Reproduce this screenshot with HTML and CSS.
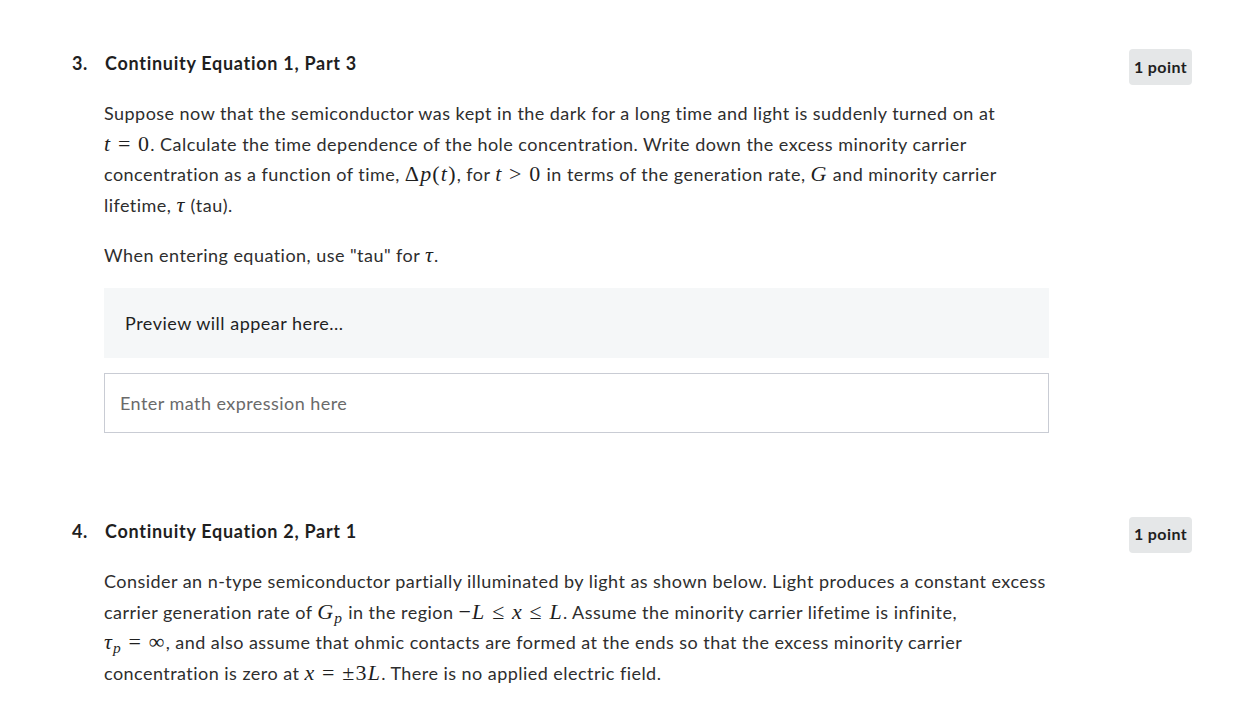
FILE: index.html
```html
<!DOCTYPE html>
<html lang="en">
<head>
<meta charset="utf-8">
<title>Continuity Equation</title>
<link rel="stylesheet" href="styles.css">
</head>
<body>
<main class="page">
  <section class="question">
    <div class="num">3.</div>
    <h2 class="title">Continuity Equation 1, Part 3</h2>
    <div class="badge">1 point</div>
    <div class="body">
      <p>Suppose now that the semiconductor was kept in the dark for a long time and light is suddenly turned on at<br><span class="m"><i>t</i><span class="rel">=</span>0</span>. Calculate the time dependence of the hole concentration. Write down the excess minority carrier<br>concentration as a function of time, <span class="m">Δ<i>p</i>(<i>t</i>)</span>, for <span class="m"><i>t</i><span class="rel">&gt;</span>0</span> in terms of the generation rate, <span class="m"><i>G</i></span> and minority carrier<br>lifetime, <span class="m"><i>τ</i></span> (tau).</p>
      <p>When entering equation, use "tau" for <span class="m"><i>τ</i></span>.</p>
      <div class="preview">Preview will appear here...</div>
      <input class="entry" type="text" placeholder="Enter math expression here">
    </div>
  </section>
  <section class="question">
    <div class="num">4.</div>
    <h2 class="title">Continuity Equation 2, Part 1</h2>
    <div class="badge">1 point</div>
    <div class="body">
      <p>Consider an n-type semiconductor partially illuminated by light as shown below. Light produces a constant excess<br>carrier generation rate of <span class="m"><i>G</i><sub><i>p</i></sub></span> in the region <span class="m">−<i>L</i><span class="rel">≤</span><i>x</i><span class="rel">≤</span><i>L</i></span>. Assume the minority carrier lifetime is infinite,<br><span class="m"><i>τ</i><sub><i>p</i></sub><span class="rel">=</span>∞</span>, and also assume that ohmic contacts are formed at the ends so that the excess minority carrier<br>concentration is zero at <span class="m"><i>x</i><span class="rel">=</span>±3<i>L</i></span>. There is no applied electric field.</p>
    </div>
  </section>
</main>
</body>
</html>
```

FILE: styles.css
```css
* { box-sizing: border-box; }
html, body { margin: 0; padding: 0; background: #ffffff; }
body {
  font-family: "Lato", "Source Sans Pro", "Noto Sans", sans-serif;
  color: #2e2e2e;
  font-size: 18px;
  letter-spacing: 0.46px;
}
.page {
  padding: 49px 50px 0 72px;
}
.question {
  display: grid;
  grid-template-columns: 32px 945px 1fr;
  grid-template-rows: 36px auto;
  margin-bottom: 84px;
}
.num {
  grid-column: 1; grid-row: 1;
  font-weight: 700;
  font-size: 18px;
  line-height: 28px;
  color: #1f1f1f;
}
.title {
  grid-column: 2; grid-row: 1;
  margin: 0;
  font-size: 18px;
  font-weight: 700;
  line-height: 28px;
  color: #1f1f1f;
  padding-left: 1px;
  letter-spacing: 0.72px;
}
.badge {
  grid-column: 3; grid-row: 1;
  justify-self: end;
  background: #e5e7e8;
  border-radius: 4px;
  height: 36px;
  width: 63px;
  justify-content: center;
  display: flex;
  align-items: center;
  padding-bottom: 2px;
  font-weight: 700;
  font-size: 16px;
  letter-spacing: 0.4px;
  color: #1f1f1f;
}
.body {
  grid-column: 2; grid-row: 2;
  padding-top: 13px;
}
.body p {
  margin: 0 0 20px;
  line-height: 30.6px;
}
.m {
  font-family: "Liberation Serif", "Times New Roman", serif;
  font-size: 22px;
  line-height: 1;
  letter-spacing: 1.2px;
  color: #1f1f1f;
  white-space: nowrap;
}
.m i { font-style: italic; }
.m sub { font-size: 0.7em; vertical-align: -0.25em; line-height: 1; }
.rel { margin: 0 0.3em; }
.preview {
  margin-top: -3px;
  background: #f5f7f8;
  height: 70px;
  padding: 20px 21px;
  line-height: 30px;
  color: #1f1f1f;
  letter-spacing: 0.5px;
}
.entry {
  display: block;
  margin-top: 15px;
  width: 100%;
  height: 60px;
  border: 1px solid #c9ccd4;
  padding: 0 15px;
  font-family: inherit;
  font-size: 18px;
  letter-spacing: 0.45px;
  color: #1f1f1f;
  background: #ffffff;
  outline: none;
}
.entry::placeholder { color: #6a6a6a; }
```
